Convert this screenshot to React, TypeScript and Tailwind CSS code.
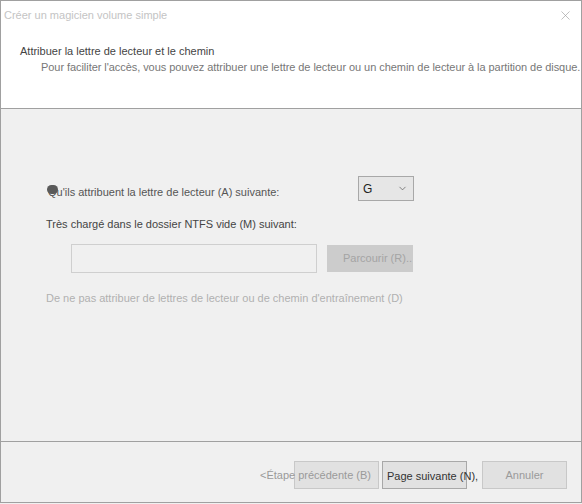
import { X, ChevronDown } from 'lucide-react';

const font = { fontFamily: '"Liberation Sans", Arial, sans-serif' };

export default function App() {
  return (
    <div className="w-[582px] h-[504px] bg-[#f0f0f0] text-[11px]" style={font}>
      <div className="w-[582px] h-[503px] border border-[#a0a0a0] flex flex-col bg-[#f0f0f0]">
        {/* title bar */}
        <div className="h-[29px] bg-white flex items-center justify-between pl-[3px] pr-[8px]">
          <span className="text-[11px] text-[#c4c4c4]">Créer un magicien volume simple</span>
          <X className="w-[15px] h-[15px] text-[#9a9a9a]" strokeWidth={1} />
        </div>

        {/* header */}
        <div className="h-[79px] bg-white border-b border-[#a0a0a0] pt-[13px]">
          <div className="pl-[19px] text-[#444444] leading-[16px]">Attribuer la lettre de lecteur et le chemin</div>
          <div className="pl-[40px] text-[#777777] leading-[16px] whitespace-nowrap tracking-[-0.06px]">
            Pour faciliter l'accès, vous pouvez attribuer une lettre de lecteur ou un chemin de lecteur à la partition de disque.
          </div>
        </div>

        {/* body */}
        <div className="flex-1 flex flex-col pt-[67px] pl-[45px] border-b border-[#a0a0a0]">
          <div className="flex items-center h-[25px] w-[368px] justify-between">
            <div className="relative flex items-center text-[#555555] pl-[2px] pt-[7px]">
              <span className="absolute left-[1px] top-[8px] w-[11px] h-[9px] rounded-full bg-[#5a5a5a] blur-[0.6px]" />
              Qu'ils attribuent la lettre de lecteur (A) suivante:
            </div>
            <div className="w-[56px] h-[25px] border border-[#a8a8a8] bg-[#e6e6e6] flex items-center justify-between pl-[4px] pr-[5px] text-[12px] text-[#222222]">
              <span>G</span>
              <ChevronDown className="w-[11px] h-[11px] text-[#555555]" strokeWidth={1.5} />
            </div>
          </div>

          <div className="mt-[16px] text-[#444444] leading-[14px]">Très chargé dans le dossier NTFS vide (M) suivant:</div>

          <div className="flex items-center mt-[13px] pl-[25px]">
            <div className="w-[246px] h-[29px] border border-[#cfcfcf] bg-[#f0f0f0]" />
            <div className="ml-[10px] w-[86px] h-[27px] bg-[#cccccc] flex items-center justify-end pr-[1px] text-[#a4a4a4] whitespace-nowrap overflow-hidden">
              Parcourir (R)..
            </div>
          </div>

          <div className="mt-[18px] text-[#b0b0b0] leading-[14px]">
            De ne pas attribuer de lettres de lecteur ou de chemin d'entraînement (D)
          </div>
        </div>

        {/* footer */}
        <div className="h-[60px] flex items-start pt-[19px] pl-[293px] gap-[3px]">
          <div className="relative w-[85px] h-[28px] border border-[#c8c8c8] bg-[#e1e1e1] text-[#9a9a9a] whitespace-nowrap">
            <span className="absolute right-[7px] top-1/2 -translate-y-1/2">
              &lt;Étape précédente (B)
            </span>
          </div>
          <div className="relative w-[85px] h-[28px] border border-[#a8a8a8] bg-[#e1e1e1] text-[#333333] whitespace-nowrap">
            <span className="absolute left-[4px] top-[6px]">Page suivante (N),</span>
          </div>
          <div className="ml-[12px] w-[85px] h-[28px] border border-[#c8c8c8] bg-[#e1e1e1] flex items-center justify-center text-[#9a9a9a]">
            Annuler
          </div>
        </div>
      </div>
    </div>
  );
}
